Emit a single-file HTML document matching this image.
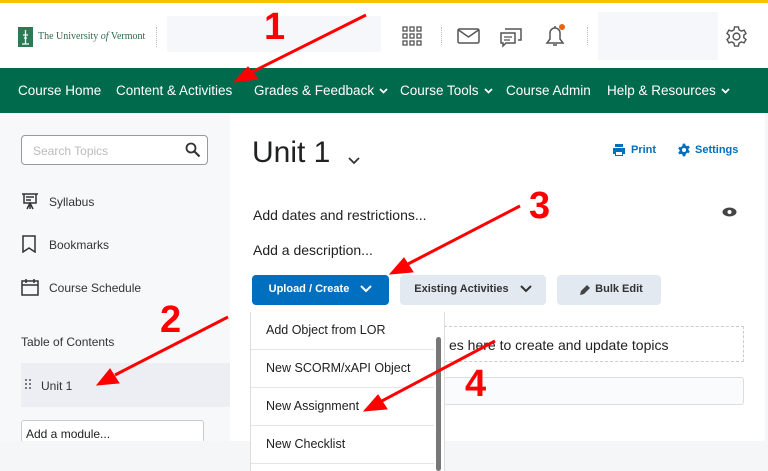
<!DOCTYPE html>
<html><head><meta charset="utf-8"><style>
*{box-sizing:border-box;margin:0;padding:0}
body{width:768px;height:471px;overflow:hidden;font-family:"Liberation Sans",sans-serif;background:#f5f6f8;position:relative;color:#202122}
.a{position:absolute}
.nav span{position:absolute;top:83px;color:#fff;font-size:13.5px;white-space:nowrap}
.nav svg,.btn svg{margin-left:5px;vertical-align:middle}
.side{font-size:12px;color:#333}
.menu div{position:absolute;left:0;width:183px;height:38px;border-bottom:1px solid #e3e5e8;font-size:12.5px;padding:11px 0 0 15px;color:#202122}
.btn{position:absolute;top:275px;height:30px;border-radius:4px;font-size:11px;font-weight:bold;padding:8px 0 0 0;text-align:center;white-space:nowrap}
</style></head><body>
<div class="a" style="left:0;top:0;width:768px;height:3px;background:#f5c400"></div>
<div class="a" style="left:0;top:3px;width:768px;height:65px;background:#fff"></div>
<div class="a" style="left:18px;top:27px;width:15px;height:20px;background:#2a7a54"></div>
<svg class="a" style="left:18px;top:27px" width="15" height="20"><path d="M7.5 3v14M5 8h5M4 17h7M6 11h3" stroke="#fff" stroke-width="1.3"/></svg>
<div class="a" style="left:38px;top:31px;font-family:'Liberation Serif',serif;font-size:10px;color:#2a6a4d">The University <i>of</i> Vermont</div>
<div class="a" style="left:156px;top:27px;height:20px;border-left:1px dotted #bbb"></div>
<div class="a" style="left:167px;top:16px;width:214px;height:36px;background:#f6f7fb"></div>
<svg class="a" style="left:402px;top:26px" width="20" height="20"><g fill="none" stroke="#555" stroke-width="1.3"><rect x="1" y="1" width="4" height="4"/><rect x="8" y="1" width="4" height="4"/><rect x="15" y="1" width="4" height="4"/><rect x="1" y="8" width="4" height="4"/><rect x="8" y="8" width="4" height="4"/><rect x="15" y="8" width="4" height="4"/><rect x="1" y="15" width="4" height="4"/><rect x="8" y="15" width="4" height="4"/><rect x="15" y="15" width="4" height="4"/></g></svg>
<div class="a" style="left:441px;top:27px;height:18px;border-left:1px dotted #bbb"></div>
<svg class="a" style="left:457px;top:28px" width="24" height="16"><rect x="1" y="1" width="21" height="14" rx="1.5" fill="none" stroke="#555" stroke-width="1.5"/><path d="M1.5 2l10 7 10-7" fill="none" stroke="#555" stroke-width="1.5"/></svg>
<svg class="a" style="left:499px;top:24px" width="24" height="24"><path d="M6 5h16v11h-3M2 9h14v10H7l-3 3v-3H2z" fill="none" stroke="#555" stroke-width="1.5"/><path d="M5 13h8M5 16h6" stroke="#555" stroke-width="1.3"/></svg>
<svg class="a" style="left:543px;top:23px" width="24" height="24"><path d="M4 20h16l-3-4V10a5 5 0 0 0-10 0v6zM10 22h4M12 3v2" fill="none" stroke="#555" stroke-width="1.5"/><circle cx="19" cy="4" r="3" fill="#e8650e"/></svg>
<div class="a" style="left:587px;top:27px;height:18px;border-left:1px dotted #bbb"></div>
<div class="a" style="left:598px;top:12px;width:120px;height:48px;background:#f6f7fb"></div>
<svg class="a" style="left:725px;top:25px" width="23" height="23" viewBox="0 0 24 24"><path d="M10 2h4l.6 3 2.4 1.4 2.9-1 2 3.4-2.3 2v2.4l2.3 2-2 3.4-2.9-1L14.6 19 14 22h-4l-.6-3-2.4-1.4-2.9 1-2-3.4 2.3-2v-2.4l-2.3-2 2-3.4 2.9 1L9.4 5z" fill="none" stroke="#555" stroke-width="1.5"/><circle cx="12" cy="12" r="3.5" fill="none" stroke="#555" stroke-width="1.5"/></svg>
<div class="a" style="left:0;top:68px;width:768px;height:45px;background:#006a4d"></div>
<div class="nav"><span style="left:18px">Course Home</span><span style="left:116px">Content &amp; Activities</span><span style="left:254px">Grades &amp; Feedback<svg width="9" height="6"><path d="M1 1l3.5 3.5L8 1" fill="none" stroke="#fff" stroke-width="1.8"/></svg></span><span style="left:400px">Course Tools<svg width="9" height="6"><path d="M1 1l3.5 3.5L8 1" fill="none" stroke="#fff" stroke-width="1.8"/></svg></span><span style="left:506px">Course Admin</span><span style="left:607px">Help &amp; Resources<svg width="9" height="6"><path d="M1 1l3.5 3.5L8 1" fill="none" stroke="#fff" stroke-width="1.8"/></svg></span></div>
<div class="a" style="left:0;top:113px;width:230px;height:328px;background:#f7f8fa"></div>
<div class="a" style="left:21px;top:135px;width:187px;height:30px;border:1px solid #999;border-radius:4px;background:#fff;font-size:12px;color:#bbb;padding:8px 0 0 11px">Search Topics</div>
<svg class="a" style="left:185px;top:142px" width="16" height="16"><circle cx="6" cy="6" r="4.5" fill="none" stroke="#333" stroke-width="1.8"/><path d="M9.5 9.5l5 5" stroke="#333" stroke-width="2.2"/></svg>
<svg class="a" style="left:21px;top:192px" width="18" height="18"><path d="M1 2h16M3 2v9h12V2M9 11v6M6 17l3-6 3 6M5 5h8M5 8h5" fill="none" stroke="#333" stroke-width="1.5"/></svg>
<div class="a side" style="left:49px;top:195px">Syllabus</div>
<svg class="a" style="left:22px;top:235px" width="14" height="18"><path d="M1 1h12v16l-6-4-6 4z" fill="none" stroke="#333" stroke-width="1.5"/></svg>
<div class="a side" style="left:49px;top:238px">Bookmarks</div>
<svg class="a" style="left:21px;top:278px" width="18" height="18"><rect x="1" y="3" width="16" height="14" fill="none" stroke="#333" stroke-width="1.5"/><path d="M1 7h16M5 1v4M13 1v4" stroke="#333" stroke-width="1.5"/></svg>
<div class="a side" style="left:49px;top:281px">Course Schedule</div>
<div class="a side" style="left:21px;top:335px">Table of Contents</div>
<div class="a" style="left:21px;top:363px;width:209px;height:44px;background:#eceef3"></div>
<svg class="a" style="left:24px;top:378px" width="8" height="13"><g fill="#555"><circle cx="2" cy="2" r="1"/><circle cx="6" cy="2" r="1"/><circle cx="2" cy="6" r="1"/><circle cx="6" cy="6" r="1"/><circle cx="2" cy="10" r="1"/><circle cx="6" cy="10" r="1"/></g></svg>
<div class="a side" style="left:41px;top:379px">Unit 1</div>
<div class="a" style="left:21px;top:420px;width:183px;height:21px;border:1px solid #ccc;border-bottom:none;border-radius:3px 3px 0 0;background:#fff;font-size:12px;padding:6px 0 0 4px">Add a module...</div>
<div class="a" style="left:230px;top:113px;width:535px;height:328px;background:#fff"></div>
<div class="a" style="left:252px;top:136px;font-size:30px;color:#202122">Unit 1</div>
<svg class="a" style="left:348px;top:157px" width="12" height="8"><path d="M1 1l5 5 5-5" fill="none" stroke="#333" stroke-width="1.8"/></svg>
<svg class="a" style="left:612px;top:143px" width="14" height="14"><path d="M3 1h8v3H3zM1 5h12v6h-2v2H3v-2H1z" fill="#006fbf"/><rect x="4" y="9" width="6" height="3" fill="#fff"/></svg>
<div class="a" style="left:631px;top:144px;font-size:11px;color:#006fbf;font-weight:bold">Print</div>
<svg class="a" style="left:677px;top:143px" width="14" height="14" viewBox="0 0 24 24"><path d="M10 1h4l.6 3 2.4 1.4 2.9-1 2 3.4-2.3 2v2.4l2.3 2-2 3.4-2.9-1L14.6 20 14 23h-4l-.6-3-2.4-1.4-2.9 1-2-3.4 2.3-2v-2.4l-2.3-2 2-3.4 2.9 1L9.4 4z" fill="#006fbf"/><circle cx="12" cy="12" r="3.5" fill="#fff"/></svg>
<div class="a" style="left:695px;top:144px;font-size:11px;color:#006fbf;font-weight:bold">Settings</div>
<div class="a" style="left:253px;top:207px;font-size:14px">Add dates and restrictions...</div>
<svg class="a" style="left:722px;top:207px" width="15" height="10"><ellipse cx="7.5" cy="5" rx="7" ry="4.5" fill="#444"/><circle cx="7.5" cy="5" r="2" fill="#fff"/></svg>
<div class="a" style="left:253px;top:242px;font-size:14px">Add a description...</div>
<div class="btn" style="left:252px;width:137px;background:#006fbf;color:#fff">Upload / Create <svg width="12" height="8" style="margin-left:8px"><path d="M1 1l5 5 5-5" fill="none" stroke="#fff" stroke-width="2"/></svg></div>
<div class="btn" style="left:400px;width:146px;background:#e3e9f1;color:#333">Existing Activities <svg width="12" height="8" style="margin-left:8px"><path d="M1 1l5 5 5-5" fill="none" stroke="#333" stroke-width="2"/></svg></div>
<div class="btn" style="left:557px;width:104px;background:#e3e9f1;color:#333;padding-left:20px">Bulk Edit</div>
<svg class="a" style="left:578px;top:283px" width="14" height="14"><path d="M2 12l1-4 6-6 3 3-6 6z" fill="#444"/></svg>
<div class="a" style="left:444px;top:326px;width:300px;height:36px;border:1px dashed #ccc;font-size:14px;padding:10px 0 0 4px;color:#202122">es here to create and update topics</div>
<div class="a" style="left:444px;top:377px;width:300px;height:28px;border:1px solid #ddd;border-radius:3px;background:#fafbfc"></div>
<div class="a menu" style="left:250px;top:312px;width:195px;height:159px;background:#fff;border-left:1px solid #ddd;border-right:1px solid #ddd">
<div style="top:0">Add Object from LOR</div><div style="top:38px">New SCORM/xAPI Object</div><div style="top:76px">New Assignment</div><div style="top:114px">New Checklist</div>
</div>
<div class="a" style="left:436px;top:337px;width:5px;height:134px;background:#777;border-radius:3px"></div>
<svg class="a" style="left:0;top:0" width="768" height="471">
<g stroke="#f00" stroke-width="3" fill="#f00">
<line x1="366" y1="15" x2="250" y2="73"/><path d="M234 82l24-3-10-12z" stroke-width="1"/>
<line x1="228" y1="317" x2="115" y2="375"/><path d="M97 385l22-2-9-14z" stroke-width="1"/>
<line x1="520" y1="206" x2="406" y2="265"/><path d="M390 274l23-2-9-14z" stroke-width="1"/>
<line x1="495" y1="341" x2="380" y2="402"/><path d="M364 411l23-2-9-14z" stroke-width="1"/>
</g>
<g fill="#f00" font-family="Liberation Sans" font-size="38" font-weight="bold">
<text x="264" y="39">1</text><text x="160" y="332">2</text><text x="529" y="218">3</text><text x="465" y="396">4</text>
</g></svg>
</body></html>
